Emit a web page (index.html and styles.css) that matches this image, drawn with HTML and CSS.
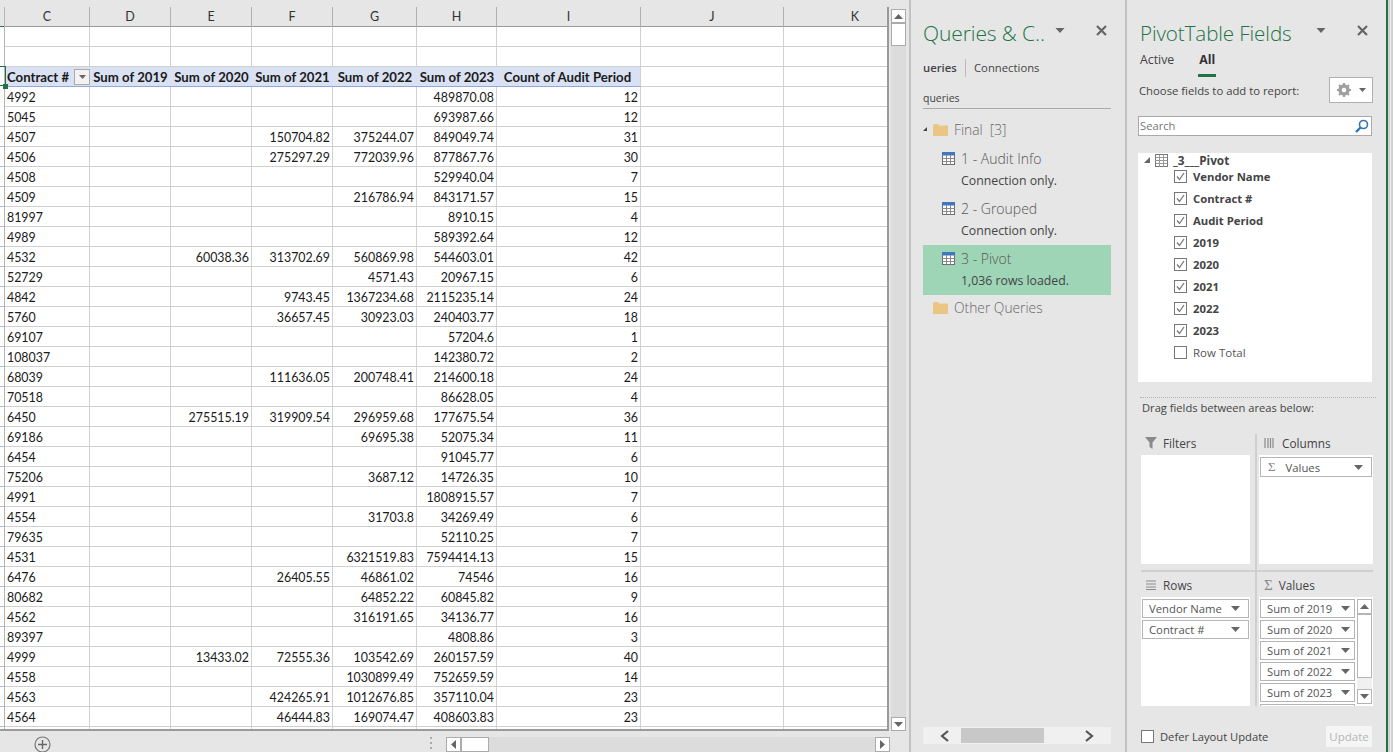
FILE: index.html
```html
<!DOCTYPE html>
<html lang="en">
<head>
<meta charset="utf-8">
<title>Excel – PivotTable</title>
<link rel="stylesheet" href="styles.css">
</head>
<body>
<svg class="defs" width="0" height="0" aria-hidden="true">
  <symbol id="tbl" viewBox="0 0 13 13"><rect x=".5" y=".5" width="12" height="12" fill="#fff" stroke="#6d6d6d"/><rect x="0" y="0" width="13" height="3.5" fill="#3f78bd"/><path d="M4.5 3v9.5M8.5 3v9.5M.5 6.5h12M.5 9.5h12" stroke="#8a8a8a" fill="none"/></symbol>
  <symbol id="tblg" viewBox="0 0 13 13"><rect x=".5" y=".5" width="12" height="12" fill="#fff" stroke="#777"/><path d="M4.5 .5v12M8.5 .5v12M.5 3.5h12M.5 6.5h12M.5 9.5h12" stroke="#999" fill="none"/></symbol>
  <symbol id="fold" viewBox="0 0 15 13"><path d="M0 2.5 1 1h4l1 1.5h9V13H0z" fill="#eac684"/></symbol>
  <symbol id="x" viewBox="0 0 11 11"><path d="M1 1l9 9M10 1l-9 9" stroke="#666" stroke-width="2.2" fill="none"/></symbol>
  <symbol id="dn" viewBox="0 0 9 5"><path d="M0 0h9L4.500 5z" fill="#666"/></symbol>
  <symbol id="chk" viewBox="0 0 13 13"><rect x=".5" y=".5" width="12" height="12" fill="#fff" stroke="#777"/><path d="M3 6.500l2.500 3L10 3" stroke="#777" stroke-width="1.300" fill="none"/></symbol>
  <symbol id="box" viewBox="0 0 13 13"><rect x=".5" y=".5" width="12" height="12" fill="#fff" stroke="#777"/></symbol>
</svg>
<main class="app">
  <section class="work">
    <div class="top-gap"></div>
    <div class="sheet-wrap">
      <div class="sheet">
        <div class="rowhead"><i class="corner"></i><i class="cur"></i><i class="handle"></i></div>
        <table class="grid">
          <colgroup><col class="c85"><col class="c81"><col class="c81"><col class="c81"><col class="c84"><col class="c80"><col class="c144"><col class="c143"><col class="c143"></colgroup>
          <thead><tr><th>C</th><th>D</th><th>E</th><th>F</th><th>G</th><th>H</th><th>I</th><th>J</th><th>K</th></tr></thead>
          <tbody>
            <tr><td></td><td></td><td></td><td></td><td></td><td></td><td></td><td></td><td></td></tr>
            <tr><td></td><td></td><td></td><td></td><td></td><td></td><td></td><td></td><td></td></tr>
            <tr class="ph"><td class="filt">Contract #<b class="fbtn"><svg width="7" height="4"><use href="#dn"/></svg></b></td><td>Sum of 2019</td><td>Sum of 2020</td><td>Sum of 2021</td><td>Sum of 2022</td><td>Sum of 2023</td><td>Count of Audit Period</td><td class="pl"></td><td class="pl"></td></tr>
            <tr><td>4992</td><td></td><td></td><td></td><td></td><td>489870.08</td><td>12</td><td></td><td></td></tr>
            <tr><td>5045</td><td></td><td></td><td></td><td></td><td>693987.66</td><td>12</td><td></td><td></td></tr>
            <tr><td>4507</td><td></td><td></td><td>150704.82</td><td>375244.07</td><td>849049.74</td><td>31</td><td></td><td></td></tr>
            <tr><td>4506</td><td></td><td></td><td>275297.29</td><td>772039.96</td><td>877867.76</td><td>30</td><td></td><td></td></tr>
            <tr><td>4508</td><td></td><td></td><td></td><td></td><td>529940.04</td><td>7</td><td></td><td></td></tr>
            <tr><td>4509</td><td></td><td></td><td></td><td>216786.94</td><td>843171.57</td><td>15</td><td></td><td></td></tr>
            <tr><td>81997</td><td></td><td></td><td></td><td></td><td>8910.15</td><td>4</td><td></td><td></td></tr>
            <tr><td>4989</td><td></td><td></td><td></td><td></td><td>589392.64</td><td>12</td><td></td><td></td></tr>
            <tr><td>4532</td><td></td><td>60038.36</td><td>313702.69</td><td>560869.98</td><td>544603.01</td><td>42</td><td></td><td></td></tr>
            <tr><td>52729</td><td></td><td></td><td></td><td>4571.43</td><td>20967.15</td><td>6</td><td></td><td></td></tr>
            <tr><td>4842</td><td></td><td></td><td>9743.45</td><td>1367234.68</td><td>2115235.14</td><td>24</td><td></td><td></td></tr>
            <tr><td>5760</td><td></td><td></td><td>36657.45</td><td>30923.03</td><td>240403.77</td><td>18</td><td></td><td></td></tr>
            <tr><td>69107</td><td></td><td></td><td></td><td></td><td>57204.6</td><td>1</td><td></td><td></td></tr>
            <tr><td>108037</td><td></td><td></td><td></td><td></td><td>142380.72</td><td>2</td><td></td><td></td></tr>
            <tr><td>68039</td><td></td><td></td><td>111636.05</td><td>200748.41</td><td>214600.18</td><td>24</td><td></td><td></td></tr>
            <tr><td>70518</td><td></td><td></td><td></td><td></td><td>86628.05</td><td>4</td><td></td><td></td></tr>
            <tr><td>6450</td><td></td><td>275515.19</td><td>319909.54</td><td>296959.68</td><td>177675.54</td><td>36</td><td></td><td></td></tr>
            <tr><td>69186</td><td></td><td></td><td></td><td>69695.38</td><td>52075.34</td><td>11</td><td></td><td></td></tr>
            <tr><td>6454</td><td></td><td></td><td></td><td></td><td>91045.77</td><td>6</td><td></td><td></td></tr>
            <tr><td>75206</td><td></td><td></td><td></td><td>3687.12</td><td>14726.35</td><td>10</td><td></td><td></td></tr>
            <tr><td>4991</td><td></td><td></td><td></td><td></td><td>1808915.57</td><td>7</td><td></td><td></td></tr>
            <tr><td>4554</td><td></td><td></td><td></td><td>31703.8</td><td>34269.49</td><td>6</td><td></td><td></td></tr>
            <tr><td>79635</td><td></td><td></td><td></td><td></td><td>52110.25</td><td>7</td><td></td><td></td></tr>
            <tr><td>4531</td><td></td><td></td><td></td><td>6321519.83</td><td>7594414.13</td><td>15</td><td></td><td></td></tr>
            <tr><td>6476</td><td></td><td></td><td>26405.55</td><td>46861.02</td><td>74546</td><td>16</td><td></td><td></td></tr>
            <tr><td>80682</td><td></td><td></td><td></td><td>64852.22</td><td>60845.82</td><td>9</td><td></td><td></td></tr>
            <tr><td>4562</td><td></td><td></td><td></td><td>316191.65</td><td>34136.77</td><td>16</td><td></td><td></td></tr>
            <tr><td>89397</td><td></td><td></td><td></td><td></td><td>4808.86</td><td>3</td><td></td><td></td></tr>
            <tr><td>4999</td><td></td><td>13433.02</td><td>72555.36</td><td>103542.69</td><td>260157.59</td><td>40</td><td></td><td></td></tr>
            <tr><td>4558</td><td></td><td></td><td></td><td>1030899.49</td><td>752659.59</td><td>14</td><td></td><td></td></tr>
            <tr><td>4563</td><td></td><td></td><td>424265.91</td><td>1012676.85</td><td>357110.04</td><td>23</td><td></td><td></td></tr>
            <tr><td>4564</td><td></td><td></td><td>46444.83</td><td>169074.47</td><td>408603.83</td><td>23</td><td></td><td></td></tr>
            <tr><td></td><td></td><td></td><td></td><td></td><td></td><td></td><td></td><td></td></tr>
          </tbody>
        </table>
      </div>
      <div class="vscroll">
        <b class="sbtn"><svg width="9" height="5"><path d="M0 5h9L4.500 0z" fill="#666"/></svg></b>
        <b class="sthumb"></b>
        <span class="strack"></span>
        <b class="sbtn"><svg width="9" height="5"><use href="#dn"/></svg></b>
      </div>
    </div>
    <div class="tabbar">
      <span class="addsheet"><svg width="17" height="17" viewBox="0 0 17 17"><circle cx="8.500" cy="8.500" r="7.500" fill="none" stroke="#777" stroke-width="1.200"/><path d="M8.500 4v9M4 8.500h9" stroke="#666" stroke-width="1.400"/></svg></span>
      <span class="grip"></span>
      <b class="hbtn"><svg width="5" height="9"><path d="M5 0v9L0 4.500z" fill="#666"/></svg></b>
      <b class="hthumb"></b>
      <span class="htrack"></span>
      <b class="hbtn"><svg width="5" height="9"><path d="M0 0v9l5-4.500z" fill="#666"/></svg></b>
    </div>
  </section>

  <aside class="qpane">
    <header class="qhead"><h2>Queries &amp; C..</h2><svg class="caret" width="10" height="5"><use href="#dn"/></svg><svg class="close" width="11" height="11"><use href="#x"/></svg></header>
    <nav class="qtabs"><span class="qt-on">ueries</span><span class="qsep"></span><span>Connections</span></nav>
    <div class="qcount">queries</div>
    <div class="qgroup"><i class="tw"></i><svg class="ficon" width="15" height="13"><use href="#fold"/></svg><span>Final&nbsp; [3]</span></div>
    <div class="qitem"><div class="qname"><svg width="13" height="13"><use href="#tbl"/></svg><span>1 - Audit Info</span></div><div class="qsub">Connection only.</div></div>
    <div class="qitem"><div class="qname"><svg width="13" height="13"><use href="#tbl"/></svg><span>2 - Grouped</span></div><div class="qsub">Connection only.</div></div>
    <div class="qitem sel"><div class="qname"><svg width="13" height="13"><use href="#tbl"/></svg><span>3 - Pivot</span></div><div class="qsub">1,036 rows loaded.</div></div>
    <div class="qgroup other"><svg class="ficon" width="15" height="13"><use href="#fold"/></svg><span>Other Queries</span></div>
    <div class="qscroll">
      <svg width="9" height="12" viewBox="0 0 9 12"><path d="M8 1 2 6l6 5" stroke="#555" stroke-width="2.200" fill="none"/></svg>
      <b class="qthumb"></b>
      <svg width="9" height="12" viewBox="0 0 9 12"><path d="M1 1l6 5-6 5" stroke="#555" stroke-width="2.200" fill="none"/></svg>
    </div>
  </aside>

  <aside class="ppane">
    <header class="phead"><h2>PivotTable Fields</h2><svg class="caret" width="10" height="5"><use href="#dn"/></svg><svg class="close" width="11" height="11"><use href="#x"/></svg></header>
    <nav class="ptabs"><span>Active</span><span class="on">All</span></nav>
    <div class="choose"><span>Choose fields to add to report:</span>
      <b class="gear"><svg width="14" height="14" viewBox="0 0 14 14"><circle cx="7" cy="7" r="4" fill="none" stroke="#a0a0a0" stroke-width="3.400"/><path d="M7 0v3M7 11v3M0 7h3M11 7h3M2 2l2 2M10 10l2 2M12 2l-2 2M4 10l-2 2" stroke="#a0a0a0" stroke-width="2.200"/></svg><svg width="7" height="4"><use href="#dn"/></svg></b>
    </div>
    <div class="search"><span>Search</span><svg width="14" height="14" viewBox="0 0 14 14"><circle cx="8.500" cy="5.500" r="4" fill="none" stroke="#2f75b5" stroke-width="1.600"/><path d="M5.500 8.500 1 13" stroke="#2f75b5" stroke-width="2.400"/></svg></div>
    <div class="fields">
      <div class="froot"><i class="tw2"></i><svg width="13" height="13"><use href="#tblg"/></svg><b>_3___Pivot</b></div>
      <label class="f on"><svg width="13" height="13"><use href="#chk"/></svg>Vendor Name</label>
      <label class="f on"><svg width="13" height="13"><use href="#chk"/></svg>Contract #</label>
      <label class="f on"><svg width="13" height="13"><use href="#chk"/></svg>Audit Period</label>
      <label class="f on"><svg width="13" height="13"><use href="#chk"/></svg>2019</label>
      <label class="f on"><svg width="13" height="13"><use href="#chk"/></svg>2020</label>
      <label class="f on"><svg width="13" height="13"><use href="#chk"/></svg>2021</label>
      <label class="f on"><svg width="13" height="13"><use href="#chk"/></svg>2022</label>
      <label class="f on"><svg width="13" height="13"><use href="#chk"/></svg>2023</label>
      <label class="f"><svg width="13" height="13"><use href="#box"/></svg>Row Total</label>
    </div>
    <div class="dragline">Drag fields between areas below:</div>
    <div class="areas">
      <div class="area a-l a-t">
        <div class="alabel"><svg width="12" height="12" viewBox="0 0 12 12"><path d="M0 0h12L7.500 5.500V12l-3-2V5.500z" fill="#8a8a8a"/></svg>Filters</div>
        <div class="abox"></div>
      </div>
      <div class="area a-r a-t">
        <div class="alabel"><svg width="12" height="12" viewBox="0 0 12 12"><path d="M1 1v10M4 1v10M6.500 1v10M9 1v10" stroke="#8a8a8a" stroke-width="1.200" fill="none"/></svg>Columns</div>
        <div class="abox"><div class="chip colchip"><span class="sig">Σ</span><span>Values</span><svg width="9" height="5"><use href="#dn"/></svg></div></div>
      </div>
      <div class="area a-l a-b">
        <div class="alabel"><svg width="12" height="12" viewBox="0 0 12 12"><path d="M1 2h10M1 5h10M1 8h10M1 10.500h10" stroke="#8a8a8a" stroke-width="1.200" fill="none"/></svg>Rows</div>
        <div class="abox">
          <div class="chip rowchip"><span>Vendor Name</span><svg width="9" height="5"><use href="#dn"/></svg></div>
          <div class="chip rowchip"><span>Contract #</span><svg width="9" height="5"><use href="#dn"/></svg></div>
        </div>
      </div>
      <div class="area a-r a-b">
        <div class="alabel"><span class="sig big">Σ</span>Values</div>
        <div class="abox vals">
          <div class="vlist">
            <div class="chip vchip"><span>Sum of 2019</span><svg width="9" height="5"><use href="#dn"/></svg></div>
            <div class="chip vchip"><span>Sum of 2020</span><svg width="9" height="5"><use href="#dn"/></svg></div>
            <div class="chip vchip"><span>Sum of 2021</span><svg width="9" height="5"><use href="#dn"/></svg></div>
            <div class="chip vchip"><span>Sum of 2022</span><svg width="9" height="5"><use href="#dn"/></svg></div>
            <div class="chip vchip"><span>Sum of 2023</span><svg width="9" height="5"><use href="#dn"/></svg></div>
            <div class="chip vchip"></div>
          </div>
          <div class="vbar">
            <b class="vb"><svg width="9" height="5"><path d="M0 5h9L4.500 0z" fill="#666"/></svg></b>
            <b class="vthumb"></b>
            <span class="vgap"></span>
            <b class="vb"><svg width="9" height="5"><use href="#dn"/></svg></b>
          </div>
        </div>
      </div>
    </div>
    <footer class="pfoot"><label class="defer"><svg width="13" height="13"><use href="#box"/></svg>Defer Layout Update</label><b class="update">Update</b></footer>
  </aside>
  <div class="edge"></div>
</main>
</body>
</html>
```
FILE: styles.css
```css
* { box-sizing: border-box; }
html, body { margin: 0; padding: 0; }
body { width: 1393px; height: 752px; overflow: hidden; background: #e6e6e6; font-family: "Open Sans", "Noto Sans", sans-serif; color: #444; }
.defs { position: absolute; }
h2 { margin: 0; font-weight: 300; }
svg { display: block; flex: none; }
.app { display: flex; width: 1393px; height: 752px; }

/* work area */
.work { width: 907px; flex: none; display: flex; flex-direction: column; margin-right: 2px; }
.top-gap { height: 7px; flex: none; }
.sheet-wrap { display: flex; height: 724px; flex: none; }
.sheet { width: 889px; height: 724px; flex: none; display: flex; overflow: hidden; border-bottom: 2px solid #9a9a9a; border-right: 2px solid #9a9a9a; background: #fff; position: relative; }
.rowhead { width: 5px; flex: none; padding-top: 20px; background: #e6e6e6; border-right: 1px solid #b5b5b5; position: relative; z-index: 1; }
.rowhead::before { content: ""; display: block; height: 100%; background: linear-gradient(#fff 0 99px, transparent 99px), repeating-linear-gradient(#fff 0 19px, #a9bbdc 19px 20px), #fff; }
.corner { position: absolute; left: 0; top: 19px; width: 4px; height: 1px; background: #217346; }
.cur { position: absolute; left: 0; top: 59px; width: 6px; height: 20px; border: solid #217346; border-width: 1px 1px 1px 0; }
.handle { position: absolute; left: 3px; top: 77px; width: 5px; height: 5px; background: #217346; }
.grid { border-collapse: separate; border-spacing: 0; table-layout: fixed; width: 922px; flex: none; align-self: flex-start; font-family: Lato, "Liberation Sans", sans-serif; font-size: 12.4px; color: #1a1a1a; }
.c85 { width: 85px; } .c81 { width: 81px; } .c84 { width: 84px; } .c80 { width: 80px; } .c144 { width: 144px; } .c143 { width: 143px; }
th { height: 20px; padding: 0; font-weight: 400; font-size: 12.5px; background: #e6e6e6; color: #333; text-align: center; border-right: 1px solid #b0b0b0; border-bottom: 1px solid #9a9a9a; }
td { height: 20px; padding: 2px 2px 0; border-right: 1px solid #d0d0d0; border-bottom: 1px solid #d0d0d0; text-align: right; white-space: nowrap; overflow: hidden; line-height: 17px; }
td:first-child { text-align: left; }
.ph td { background: #d9e1f2; font-weight: 700; border-right: none; border-bottom: 1px solid #8ea9db; text-align: center; padding: 2px 0 0; overflow: visible; font-size: 13.2px; }
.ph td:nth-child(7) { border-right: 1px solid #d0d0d0; padding-right: 2px; }
.ph td.pl { background: #fff; border-right: 1px solid #d0d0d0; border-bottom: 1px solid #d0d0d0; }
.ph td.filt { text-align: left; padding-left: 2px; position: relative; }
.fbtn { position: absolute; right: 0; top: 2px; width: 16px; height: 16px; background: #f2f2f2; border: 1px solid #aaa; display: flex; align-items: center; justify-content: center; }

/* scrollbar */
.vscroll { width: 15px; margin-left: 2px; margin-top: 2px; flex: none; display: flex; flex-direction: column; height: 722px; background: #dcdcdc; }
.sbtn { height: 14px; flex: none; background: #fff; border: 1px solid #ababab; display: flex; align-items: center; justify-content: center; }
.sthumb { height: 23px; flex: none; background: #fff; border: 1px solid #ababab; }
.strack { flex: 1; }

.tabbar { height: 21px; flex: none; display: flex; align-items: center; padding-top: 5px; }
.addsheet { margin-left: 34px; }
.grip { width: 2px; height: 14px; margin-left: 379px; background: repeating-linear-gradient(#aaa 0 2px, transparent 2px 5px); }
.hbtn { width: 15px; height: 15px; margin-left: 14px; flex: none; background: #fff; border: 1px solid #ababab; display: flex; align-items: center; justify-content: center; }
.hthumb { width: 28px; height: 15px; flex: none; background: #fff; border: 1px solid #ababab; }
.htrack { width: 386px; height: 15px; flex: none; background: #dcdcdc; }
.tabbar .hbtn:last-child { margin-left: 0; }

/* queries pane */
.qpane { width: 216px; flex: none; border-left: 2px solid #c2c2c2; padding: 0 14px 0 12px; position: relative; height: 752px; font-size: 12.3px; }
.qhead, .phead { display: flex; align-items: center; height: 44px; margin-top: 11px; position: relative; }
.qhead h2 { font-size: 21px; color: #217346; letter-spacing: -.1px; white-space: nowrap; }
.qhead .caret { position: absolute; left: 132px; top: 17px; }
.qhead .close { position: absolute; left: 173px; top: 14px; }
.phead { margin-left: 2px; }
.phead h2 { font-size: 20.6px; color: #217346; letter-spacing: -.1px; white-space: nowrap; }
.phead .caret { position: absolute; left: 176px; top: 17px; }
.phead .close { position: absolute; left: 217px; top: 14px; }
.qtabs { display: flex; align-items: center; height: 19px; margin-top: 3px; color: #444; font-size: 11.3px; }
.qt-on { width: 34px; font-weight: 600; white-space: nowrap; }
.qsep { width: 1px; height: 18px; background: #bbb; margin: 0 8px; }
.qcount { margin-top: 12px; height: 20px; border-bottom: 1px solid #aaa; font-size: 10.5px; line-height: 18px; }
.qgroup { display: flex; align-items: center; height: 22px; margin-top: 9px; font-size: 13.8px; color: #666; font-weight: 300; position: relative; padding-left: 10px; }
.qgroup .ficon { margin-right: 6px; }
.tw { position: absolute; left: 0; top: 9px; border: 2px solid transparent; border-right-color: #444; border-bottom-color: #444; }
.qgroup.other { margin-top: 1px; }
.qitem { padding: 0 0 0 19px; height: 50px; }
.qgroup + .qitem { margin-top: 5px; }
.qname { display: flex; align-items: center; gap: 6px; height: 25px; padding-top: 2px; font-size: 14px; font-weight: 300; color: #555; }
.qsub { height: 25px; padding-left: 19px; line-height: 22px; color: #444; }
.sel { background: #9fd5b7; color: #333; }
.qscroll { position: absolute; left: 12px; top: 727px; width: 188px; height: 17px; background: #f0f0f0; display: flex; align-items: center; justify-content: space-between; padding: 0 17px; }
.qthumb { position: absolute; left: 38px; top: 1px; width: 83px; height: 15px; background: #c8c8c8; }

/* pivot pane */
.ppane { width: 261px; flex: none; border-left: 2px solid #c2c2c2; padding-left: 11px; height: 752px; font-size: 12.3px; position: relative; }
.ptabs { display: flex; gap: 25px; height: 24px; padding: 0 0 0 2px; line-height: 19px; margin-top: -5px; }
.ptabs .on { font-weight: 700; color: #333; position: relative; }
.ptabs .on::after { content: ""; position: absolute; left: -1px; right: -1px; top: 24px; height: 3px; background: #217346; }
.choose { display: flex; justify-content: space-between; align-items: center; width: 234px; height: 26px; margin-top: 3px; margin-left: 1px; font-size: 11.3px; }
.gear { width: 44px; height: 26px; background: #fff; border: 1px solid #b0b0b0; display: flex; align-items: center; justify-content: center; gap: 8px; }
.search { width: 234px; height: 20px; margin-top: 13px; background: #fff; border: 1px solid #aaa; display: flex; align-items: center; justify-content: space-between; padding: 0 2px 1px 1px; font-size: 11.2px; color: #777; }
.fields { width: 234px; height: 229px; margin-top: 17px; background: #fff; padding: 0 0 0 2px; }
.froot { display: flex; align-items: center; height: 14px; padding-left: 4px; color: #444; }
.froot svg { margin: 0 3px 0 0; }
.froot b { font-size: 11.8px; font-weight: 700; margin-left: 2px; }
.tw2 { width: 0; height: 0; border-style: solid; border-width: 0 0 6px 6px; border-color: transparent transparent #666 transparent; margin-right: 5px; }
.f { display: flex; align-items: center; height: 22px; margin-left: 34px; gap: 6px; font-size: 11.5px; color: #555; }
.f:first-of-type { margin-top: -2px; }
.f.on { font-weight: 700; color: #444; font-size: 11.3px; }
.dragline { width: 236px; margin-top: 15px; margin-left: 2px; height: 22px; padding: 2px 0 0 2px; border-top: 1px dotted #b0b0b0; font-size: 11.15px; }
.areas { display: grid; grid-template-columns: 116px 116px; grid-template-rows: 138px 134px; margin-top: 15px; margin-left: 3px; width: 232px; }
.area { display: flex; flex-direction: column; min-width: 0; }
.a-t { border-bottom: 2px solid #cfcfcf; }
.a-l { border-right: 2px solid #cfcfcf; padding-right: 5px; }
.a-r { padding-left: 2px; }
.a-b { padding-top: 4px; }
.alabel { display: flex; align-items: center; gap: 6px; height: 21px; padding: 0 0 3px 4px; font-size: 11.8px; flex: none; }
.a-r .alabel { padding-left: 5px; }
.abox { background: #fff; height: 109px; padding: 2px 1px; overflow: hidden; flex: none; }
.chip { display: flex; align-items: center; justify-content: space-between; border: 1px solid #b5b5b5; background: #fff; height: 19px; font-size: 11.3px; padding: 0 6px; color: #555; flex: none; }
.colchip { height: 20px; padding: 0 8px 0 7px; }
.sig { font-family: "Liberation Serif", serif; font-size: 13px; color: #888; margin-right: 10px; }
.sig.big { font-size: 15px; margin: 0; }
.colchip .sig + span { flex: 1; }
.rowchip { margin: 0 0 2px 0; padding: 0 8px 0 6px; }
.vals { display: flex; padding: 2px 1px 0; }
.vlist { width: 95px; flex: none; display: flex; flex-direction: column; gap: 2px; }
.vchip { padding: 0 4px 0 6px; font-size: 11.2px; }
.vbar { width: 15px; flex: none; margin-left: 2px; display: flex; flex-direction: column; background: #f0f0f0; height: 105px; }
.vb { height: 15px; flex: none; background: #fff; border: 1px solid #b5b5b5; display: flex; align-items: center; justify-content: center; }
.vthumb { height: 64px; flex: none; background: #fff; border: 1px solid #b5b5b5; }
.vgap { flex: 1; }
.pfoot { display: flex; align-items: center; justify-content: space-between; width: 231px; height: 21px; margin-top: 20px; margin-left: 3px; }
.defer { display: flex; align-items: center; gap: 6px; font-size: 11.2px; }
.update { width: 46px; height: 21px; background: #f5f5f5; color: #b5b5b5; font-weight: 400; font-size: 11.5px; display: flex; align-items: center; justify-content: center; }
.edge { width: 7px; flex: none; border-left: 2px solid #217346; background: repeating-linear-gradient(90deg, #d8d0d4 0 1px, #c9d2cb 1px 2px, #ececec 2px 3px); }
```
